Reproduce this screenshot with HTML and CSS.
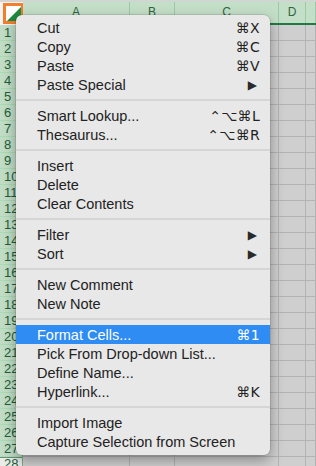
FILE: index.html
```html
<!DOCTYPE html>
<html>
<head>
<meta charset="utf-8">
<link rel="stylesheet" href="styles.css">
</head>
<body>
<div class="sheet">
  <div class="corner"><div class="selall"><svg width="15" height="15" viewBox="0 0 15 15"><polygon points="1,15 15,1 15,15" fill="#1d8a3e"/></svg></div></div>
  <div class="colheads">
    <div class="ch ca">A</div>
    <div class="ch cb">B</div>
    <div class="ch cc">C</div>
    <div class="ch cd">D</div>
    <div class="ch ce"></div>
  </div>
  <div class="rowheads">
    <div class="rh">1</div><div class="rh">2</div><div class="rh">3</div><div class="rh">4</div>
    <div class="rh">5</div><div class="rh">6</div><div class="rh">7</div><div class="rh">8</div>
    <div class="rh">9</div><div class="rh">10</div><div class="rh">11</div><div class="rh">12</div>
    <div class="rh">13</div><div class="rh">14</div><div class="rh">15</div><div class="rh">16</div>
    <div class="rh">17</div><div class="rh">18</div><div class="rh">19</div><div class="rh">20</div>
    <div class="rh">21</div><div class="rh">22</div><div class="rh">23</div><div class="rh">24</div>
    <div class="rh">25</div><div class="rh">26</div><div class="rh">27</div><div class="rh last">28</div>
  </div>
  <div class="cells">
    <div class="col ca"></div>
    <div class="col cb"></div>
    <div class="col cc"></div>
    <div class="col cd"></div>
    <div class="col ce"></div>
  </div>
</div>

<div class="menu">
  <div class="item"><span>Cut</span><span class="sc">⌘X</span></div>
  <div class="item"><span>Copy</span><span class="sc">⌘C</span></div>
  <div class="item"><span>Paste</span><span class="sc">⌘V</span></div>
  <div class="item"><span>Paste Special</span><span class="arrow">▶</span></div>
  <div class="sep"></div>
  <div class="item"><span>Smart Lookup...</span><span class="sc">⌃⌥⌘L</span></div>
  <div class="item"><span>Thesaurus...</span><span class="sc">⌃⌥⌘R</span></div>
  <div class="sep"></div>
  <div class="item"><span>Insert</span></div>
  <div class="item"><span>Delete</span></div>
  <div class="item"><span>Clear Contents</span></div>
  <div class="sep"></div>
  <div class="item"><span>Filter</span><span class="arrow">▶</span></div>
  <div class="item"><span>Sort</span><span class="arrow">▶</span></div>
  <div class="sep"></div>
  <div class="item"><span>New Comment</span></div>
  <div class="item"><span>New Note</span></div>
  <div class="sep"></div>
  <div class="item active"><span>Format Cells...</span><span class="sc">⌘1</span></div>
  <div class="item"><span>Pick From Drop-down List...</span></div>
  <div class="item"><span>Define Name...</span></div>
  <div class="item"><span>Hyperlink...</span><span class="sc">⌘K</span></div>
  <div class="sep"></div>
  <div class="item"><span>Import Image</span></div>
  <div class="item"><span>Capture Selection from Screen</span></div>
</div>
</body>
</html>
```

FILE: styles.css
```css
html, body {
  margin: 0;
  padding: 0;
  width: 316px;
  height: 466px;
  overflow: hidden;
  background: #ffffff;
  font-family: "Liberation Sans", Arial, sans-serif;
}

.sheet {
  display: grid;
  grid-template-columns: 23px 1fr;
  grid-template-rows: 25px 1fr;
  width: 316px;
  height: 466px;
}

.corner {
  background: #f4f4f4;
  border-top: 2px solid #d4d4d4;
  box-sizing: border-box;
  display: flex;
  align-items: flex-start;
  justify-content: flex-start;
  padding: 1px 0 0 3px;
}

.selall {
  width: 15px;
  height: 15px;
  border: 3px solid #f47e2c;
  background: #ffffff;
  display: flex;
}

.colheads {
  display: flex;
  background: #c4dfc8;
  border-top: 2px solid #d0d6d1;
  border-bottom: 2px solid #1f7a43;
  box-sizing: border-box;
}

.ch {
  box-sizing: border-box;
  border-right: 1px solid #9ec8a6;
  font-size: 12px;
  color: #2f6641;
  text-align: center;
  line-height: 20px;
}

.ca { width: 107px; flex: none; }
.cb { width: 45px; flex: none; }
.cc { width: 104px; flex: none; }
.cd { width: 27px; flex: none; }
.ce { flex: 1; }

.rowheads {
  display: flex;
  flex-direction: column;
  background: #c2ddc6;
  border-right: 1px solid #7fae8a;
  box-sizing: border-box;
}

.rh {
  height: 16px;
  flex: none;
  box-sizing: border-box;
  border-bottom: 1px solid #a8dcb4;
  font-size: 13px;
  line-height: 16px;
  color: #205f36;
  padding-left: 4px;
}

.rh.last {
  background: #e9ece9;
  border-top: 1px solid #6f8f78;
  line-height: 12px;
}

.cells {
  display: flex;
  background-color: #cfcfcf;
  background-image: repeating-linear-gradient(to bottom, transparent 0, transparent 15px, #b3b3b3 15px, #b3b3b3 16px);
}

.col {
  box-sizing: border-box;
  border-right: 1px solid #b3b3b3;
}

.menu {
  position: absolute;
  left: 16px;
  top: 15px;
  width: 254px;
  height: 440px;
  box-sizing: border-box;
  padding-top: 3px;
  background: #e8e8e8;
  border-radius: 6px;
  box-shadow: 0 0 0 0.5px rgba(0,0,0,0.18), 0 5px 14px rgba(0,0,0,0.35);
  display: flex;
  flex-direction: column;
}

.item {
  height: 19px;
  flex: none;
  display: flex;
  align-items: center;
  justify-content: space-between;
  padding: 0 10px 0 21px;
  font-size: 14.5px;
  color: #222222;
}

.item.active {
  background: #2f8cf3;
  color: #ffffff;
}

.sc {
  font-family: "DejaVu Sans", "Liberation Sans", sans-serif;
  font-size: 14px;
  letter-spacing: 0.3px;
}

.arrow {
  font-family: "DejaVu Sans", sans-serif;
  font-size: 12px;
  color: #2a2a2a;
  padding-right: 3px;
}

.sep {
  height: 12px;
  flex: none;
  display: flex;
  align-items: center;
}

.sep::after {
  content: "";
  display: block;
  width: 100%;
  height: 2px;
  background: #d5d5d5;
}
```
